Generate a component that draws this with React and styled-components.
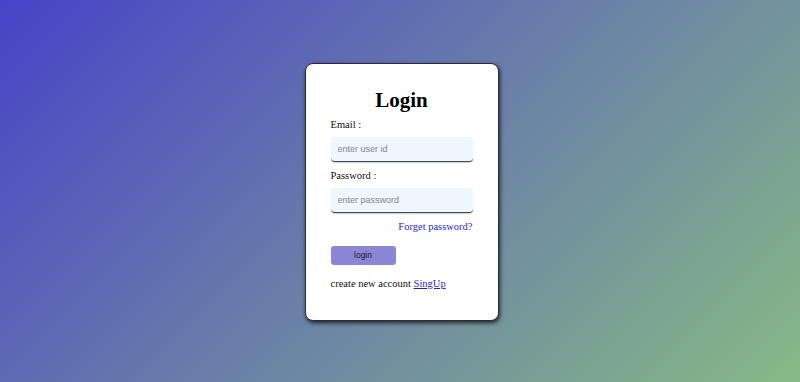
import React from 'react';
import styled, { createGlobalStyle } from 'styled-components';

const GlobalStyle = createGlobalStyle`
  html, body {
    margin: 0;
    padding: 0;
  }
  body {
    font-family: "Liberation Serif", "Times New Roman", serif;
  }
`;

const Page = styled.div`
  width: 100vw;
  height: 100vh;
  display: flex;
  align-items: center;
  justify-content: center;
  background: linear-gradient(135deg, #4843c8 0%, #6a7fa8 50%, #86ba86 100%);
`;

const Card = styled.form`
  box-sizing: border-box;
  width: 194px;
  height: 258px;
  margin-left: 3px;
  margin-top: 1px;
  padding: 24px 25px 0;
  background: #ffffff;
  border: 1px solid #2c2c3a;
  border-radius: 8px;
  box-shadow: 1px 2px 4px rgba(0, 0, 0, 0.75);
  display: flex;
  flex-direction: column;
`;

const Title = styled.h1`
  margin: 0;
  font-size: 21px;
  line-height: 24px;
  font-weight: bold;
  text-align: center;
  color: #000;
`;

const Label = styled.label`
  display: block;
  margin-top: ${(p) => p.$gap}px;
  font-size: 10.5px;
  line-height: 13px;
  color: #111;
`;

const Input = styled.input`
  box-sizing: border-box;
  width: 142px;
  height: 25px;
  margin-top: 6px;
  padding: 0 7px;
  border: none;
  border-bottom: 1.5px solid #4a4a55;
  border-radius: 4px;
  background: #eef6ff;
  box-shadow: 0 1px 1px rgba(0, 0, 0, 0.2);
  font-family: "Liberation Sans", Arial, sans-serif;
  font-size: 9px;
  outline: none;

  &::placeholder {
    color: #858585;
  }
`;

const Forget = styled.a`
  align-self: flex-end;
  margin-top: 7px;
  font-size: 10.5px;
  line-height: 13px;
  color: #1f1fd6;
  text-decoration: none;
`;

const Button = styled.button`
  box-sizing: border-box;
  width: 65px;
  height: 19px;
  margin-top: 13px;
  padding: 0;
  border: none;
  border-radius: 3px;
  background: #8c86d6;
  color: #1a1a2a;
  font-family: "Liberation Sans", Arial, sans-serif;
  font-size: 8.5px;
`;

const Footer = styled.p`
  margin: 12px 0 0;
  font-size: 10.5px;
  line-height: 13px;
  color: #111;

  a {
    color: #1f1fd6;
    text-decoration: underline;
  }
`;

const App = () => (
  <>
    <GlobalStyle />
    <Page>
      <Card onSubmit={(e) => e.preventDefault()}>
        <Title>Login</Title>
        <Label $gap={6}>Email :</Label>
        <Input type="text" placeholder="enter user id" />
        <Label $gap={7}>Password :</Label>
        <Input type="password" placeholder="enter password" />
        <Forget href="#">Forget password?</Forget>
        <Button type="submit">login</Button>
        <Footer>
          create new account <a href="#">SingUp</a>
        </Footer>
      </Card>
    </Page>
  </>
);

export default App;
